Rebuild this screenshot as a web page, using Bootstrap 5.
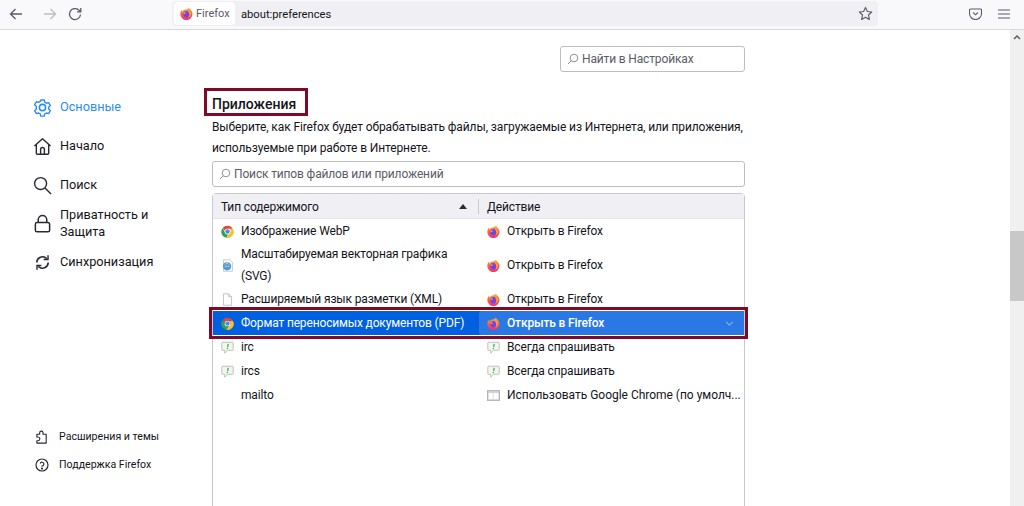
<!DOCTYPE html>
<html lang="ru">
<head>
<meta charset="utf-8">
<title>about:preferences</title>
<link href="https://cdn.jsdelivr.net/npm/bootstrap@5.3.0/dist/css/bootstrap.min.css" rel="stylesheet">
<style>
html,body{height:506px;overflow:hidden;background:#fff}
body{font-family:Roboto,"Noto Sans",sans-serif;font-size:12px;color:#15141a}
.ffbar{height:30px;background:#f9f9fb;border-bottom:1px solid #d9d9dc}
.navset{width:172px;padding:4px 0 0 9px}
.navbtn{height:20px;display:flex;align-items:center;color:#5b5b66}
.urlbox{width:706px;height:25px;margin-top:1px;background:#f0f0f4;border-radius:4px}
.idchip{width:61px;height:23px;margin-left:2px;background:#fff;border-radius:4px;padding-left:6px;gap:3px;color:#5b5b66;font-size:11px}
.idchip span{padding-top:2px}
.urltxt{margin-left:6px;font-size:11.2px;padding-top:3px;color:#15141a}
.staricon{margin-left:auto;margin-right:5px}
.rtools{padding-left:91px;gap:15px}
.pagewrap{height:476px}
.sidecol{width:212px;flex:none;position:relative}
.catlist{padding:65px 0 0 33px;list-style:none;margin:0}
.catitem{display:flex;align-items:center;gap:8px;font-size:12.7px;min-height:24px}
.catitem svg{flex:none;width:19px;height:19px}
.catitem.curr{color:#2a8cf5}
.step1{margin-bottom:15px}
.step2{margin-bottom:15px}
.step3{margin-bottom:9px}
.twolines{line-height:17px;margin-bottom:10px}
.foothelp{padding:0 0 0 35px;list-style:none;margin:0;position:absolute;left:0;top:395px}
.foothelp li{display:flex;align-items:center;gap:10px;font-size:10.6px;height:24px;margin-bottom:4px}
.maincol{width:533px;flex:none}
.srchbox{height:26px;border:1px solid #bdbdc3;border-radius:3px;display:flex;align-items:center;color:#5b5b66;padding-left:6px;gap:3px;background:#fff;font-size:12px;letter-spacing:-.15px}
.topsearch{width:185px;margin:16px 0 0 348px}
.headwrap{margin-top:16px;height:28px;display:flex;align-items:center}
.headmark{padding:3px 7px 0 8px;margin-left:-8px;outline:3px solid #7e0a26;outline-offset:-3px;height:28px;line-height:26px;font-size:14px;font-weight:500;width:104px;white-space:nowrap}
.descr{margin:1px 0 0;line-height:21px;font-size:12px;letter-spacing:-.11px;white-space:nowrap}
.fsearch{margin-top:2px}
.apptable{margin-top:6px;height:320px;border:1px solid #c8c8ce;border-radius:4px 4px 0 0;background:#fff}
.thead{height:25px;background:#f0f0f4;border-bottom:1px solid #e6e6ea;display:flex;align-items:center;font-size:12px;letter-spacing:-.15px;padding-top:1px}
.th1{width:266px;padding-left:8px;display:flex;align-items:center;justify-content:space-between;padding-right:11px;height:15px;border-right:1px solid #c8c8ce}
.th2{padding-left:8px}
.trow{display:flex;align-items:center;height:24px;font-size:12px;letter-spacing:-.15px}
.trow.tall{height:44px}
.cell1{width:266px;display:flex;align-items:center;padding-left:8px;flex:none;height:100%}
.cell2{flex:1;display:flex;align-items:center;padding-left:8px;height:100%;min-width:0;gap:7px;white-space:nowrap}
.cell1 svg,.cell2 svg{width:13px;height:13px;flex:none}
.cell1 svg{margin-right:7px}
.noicon{display:inline-block;width:13px;margin-right:7px}
.trow.sel{background:#0060df;color:#fff;outline:3px solid #7e0a26;outline-offset:1px}
.sel .cell2{background:#2a78e4;border-radius:3px 0 0 3px;font-weight:500;padding-right:10px}
.cell2 .chev{margin-left:auto;width:9px;height:5px}
.looser{letter-spacing:-.02px}
.sbar{width:14px;margin-left:265px;flex:none;background:#f0f0f0;display:flex;flex-direction:column;align-items:center}
.thumb{width:100%;height:70px;background:#c8c8c8;margin-top:191px}
.arrowtop{margin-top:5px;display:block}
.svgdefs{position:absolute}
.svgline{margin-top:4px}
</style>
</head>
<body>
<svg width="0" height="0" class="d-block svgdefs">
  <defs>
    <linearGradient id="fg" x1="0" y1="0" x2="0" y2="1"><stop offset="0" stop-color="#ffb52e"/><stop offset=".55" stop-color="#ff5a3c"/><stop offset="1" stop-color="#f22f6e"/></linearGradient>
    <symbol id="fx" viewBox="0 0 16 16">
      <path d="M11 .6c.4 1.600 1.400 2 2.400 3.200 1.300 1.500 2 3.300 2 4.800a7.500 7.500 0 1 1-15 0C.4 6.300 1.200 4.300 2.200 3.300c0 1 .4 1.700 1 2.200C4 3.700 6 2.900 8 2.700c1.400-.2 2.500-1 3-2.100z" fill="url(#fg)"/>
      <circle cx="8.200" cy="8.800" r="4" fill="#7542e5"/>
      <path d="M9 4.200c2.500.2 4.600 2 4.500 4.700-.2 2.400-2 4-4.200 4.200 1.600-.8 2.500-2.300 2.200-3.900C11.200 7.200 10.300 5.400 9 4.200z" fill="#ffa436"/>
      <path d="M4 7.500c.8-.8 2-1 3-.5l-.5 1.300C5.600 8.200 4.700 8 4 7.500z" fill="#ffd567"/>
    </symbol>
    <symbol id="chrm" viewBox="0 0 16 16">
      <path d="M8 .8a7.200 7.200 0 0 1 6.400 3.700H8A3.600 3.600 0 0 0 4.600 7L2.100 3.800A7.200 7.200 0 0 1 8 .8z" fill="#e0453a"/>
      <path d="M2.100 3.800 5.300 9.900a3.600 3.600 0 0 0 3.500 1.700l-2.100 4A7.200 7.200 0 0 1 2.100 3.800z" fill="#2fa44f"/>
      <path d="M14.400 4.500a7.200 7.200 0 0 1-7.700 11.100l3.400-5.600A3.600 3.600 0 0 0 10.700 5z" fill="#f6c12c"/>
      <circle cx="8" cy="8" r="3.500" fill="#fff"/><circle cx="8" cy="8" r="2.700" fill="#4a8be8"/>
    </symbol>
    <symbol id="bub" viewBox="0 0 16 16">
      <path d="M2 1.500h12a1 1 0 0 1 1 1v8a1 1 0 0 1-1 1H8L4.500 15v-3.500H2a1 1 0 0 1-1-1v-8a1 1 0 0 1 1-1z" fill="#f4f4f0" stroke="#b5b5ad"/>
      <path d="M8.800 3.500 8.200 7.500" stroke="#2fbf3c" stroke-width="1.600"/><circle cx="7.800" cy="9.300" r=".9" fill="#2fbf3c"/>
    </symbol>
    <symbol id="pg" viewBox="0 0 16 16">
      <path d="M3 1h6.500L13 4.500V15H3z" fill="#fff" stroke="#b8b8b8"/><path d="M9.500 1v3.500H13" fill="#eee" stroke="#b8b8b8"/>
    </symbol>
  </defs>
</svg>

<div class="ffbar d-flex">
  <div class="navset d-flex align-items-start">
    <span class="navbtn" style="width:34px"><svg width="14" height="14" viewBox="0 0 14 14" fill="none" stroke="#5b5b66" stroke-width="1.300"><path d="M13 7H1.500M6.500 2 1.500 7l5 5"/></svg></span>
    <span class="navbtn" style="width:25px"><svg width="14" height="14" viewBox="0 0 14 14" fill="none" stroke="#bcbcc2" stroke-width="1.300"><path d="M1 7h11.500M7.500 2l5 5-5 5"/></svg></span>
    <span class="navbtn" style="width:30px"><svg width="14" height="14" viewBox="0 0 14 14" fill="none" stroke="#5b5b66" stroke-width="1.300"><path d="M12.500 7.500A5.500 5.500 0 1 1 10.500 2.800L12.500 4.500"/><path d="M12.800 1v3.800H9"/></svg></span>
  </div>
  <div class="urlbox d-flex align-items-center">
    <div class="idchip d-flex align-items-center"><svg width="13" height="13"><use href="#fx"/></svg><span>Firefox</span></div>
    <span class="urltxt">about:preferences</span>
    <svg class="staricon" width="15" height="15" viewBox="0 0 16 16" fill="none" stroke="#5b5b66" stroke-width="1.200" stroke-linejoin="round"><path d="m8 1.500 2 4.300 4.600.6-3.400 3.200.9 4.700L8 12l-4.100 2.300.9-4.700L1.400 6.400 6 5.800z"/></svg>
  </div>
  <div class="rtools d-flex align-items-start pt-2">
    <svg width="13" height="12" viewBox="0 0 13 12" fill="none" stroke="#5b5b66" stroke-width="1.100"><path d="M1.500 1h10a1 1 0 0 1 1 1v3.500a6 6 0 0 1-12 0V2a1 1 0 0 1 1-1z"/><path d="m4 4.500 2.500 2.300L9 4.500"/></svg>
    <svg width="14" height="12" viewBox="0 0 14 12" fill="none" stroke="#5b5b66" stroke-width="1.200"><path d="M1 2h12M1 6h12M1 10h12"/></svg>
  </div>
</div>

<div class="pagewrap d-flex">
  <nav class="sidecol">
    <ul class="catlist">
      <li class="catitem curr step1"><svg viewBox="0 0 20 20" fill="none" stroke="#2a8cf5" stroke-width="1.600" stroke-linejoin="round"><path d="M8 1.500h4l.6 2.500 1.900 1.100 2.500-.7 2 3.400-1.900 1.800v2.200l1.900 1.800-2 3.400-2.500-.7-1.900 1.100-.6 2.500H8l-.6-2.500-1.900-1.100-2.500.7-2-3.400 1.900-1.800V8.600L1 6.800l2-3.400 2.500.7L7.400 3z" transform="translate(.8 .8) scale(.92)"/><circle cx="10" cy="10" r="3.300"/></svg><span>Основные</span></li>
      <li class="catitem step2"><svg viewBox="0 0 20 20" fill="none" stroke="#2b2a33" stroke-width="1.500" stroke-linejoin="round"><path d="M1.500 9.500 10 1.800l8.500 7.700M3.500 8v9.200a1 1 0 0 0 1 1h11a1 1 0 0 0 1-1V8"/><path d="M8 18v-5a2 2 0 0 1 4 0v5"/></svg><span>Начало</span></li>
      <li class="catitem step3"><svg viewBox="0 0 20 20" fill="none" stroke="#2b2a33" stroke-width="1.500"><circle cx="8" cy="8" r="6.300"/><path d="m12.600 12.600 6.400 6.400"/></svg><span>Поиск</span></li>
      <li class="catitem twolines"><svg viewBox="0 0 20 20" fill="none" stroke="#2b2a33" stroke-width="1.600"><rect x="2.500" y="9" width="15" height="9.800" rx="1.800"/><path d="M5.500 9V6a4.500 4.500 0 0 1 9 0v3"/></svg><span>Приватность и<br>Защита</span></li>
      <li class="catitem"><svg viewBox="0 0 20 20" fill="none" stroke="#2b2a33" stroke-width="1.700"><path d="M4 10a6 6 0 0 1 9.500-4.900l.8.800"/><path d="M15.800 2.300v4.600h-4.600" stroke-width="1.500"/><path d="M16 10a6 6 0 0 1-9.500 4.900l-.8-.8"/><path d="M4.200 17.700v-4.600h4.600" stroke-width="1.500"/></svg><span>Синхронизация</span></li>
    </ul>
    <ul class="foothelp">
      <li><svg width="14" height="14" viewBox="0 0 14 15" fill="none" stroke="#2b2a33" stroke-width="1.200" stroke-linejoin="round"><path d="M1.500 7.500V4.500h3V3a1.800 1.800 0 0 1 3.600 0v1.500h3.400V14H1.500v-2.500h1.200a2 2 0 0 0 0-4z"/></svg><span>Расширения и темы</span></li>
      <li><svg width="14" height="14" viewBox="0 0 14 14" fill="none" stroke="#2b2a33" stroke-width="1.200"><circle cx="7" cy="7" r="6"/><path d="M5.200 5.500A1.900 1.900 0 1 1 7 8v.8"/><circle cx="7" cy="10.600" r=".5" fill="#2b2a33"/></svg><span>Поддержка Firefox</span></li>
    </ul>
  </nav>

  <main class="maincol">
    <div class="srchbox topsearch"><svg width="12" height="12" viewBox="0 0 12 12" fill="none" stroke="#8f8f9d" stroke-width="1"><circle cx="7" cy="5" r="3.800"/><path d="M4.300 7.700 1 11"/></svg><span>Найти в Настройках</span></div>
    <div class="headwrap"><div class="headmark">Приложения</div></div>
    <p class="descr">Выберите, как Firefox будет обрабатывать файлы, загружаемые из Интернета, или приложения,<br>используемые при работе в Интернете.</p>
    <div class="srchbox fsearch"><svg width="12" height="12" viewBox="0 0 12 12" fill="none" stroke="#8f8f9d" stroke-width="1"><circle cx="7" cy="5" r="3.800"/><path d="M4.300 7.700 1 11"/></svg><span>Поиск типов файлов или приложений</span></div>
    <div class="apptable">
      <div class="thead">
        <div class="th1"><span>Тип содержимого</span><svg width="8" height="5" viewBox="0 0 8 5"><path d="M4 0 8 5H0z" fill="#2b2a33"/></svg></div>
        <div class="th2">Действие</div>
      </div>
      <div class="trow"><div class="cell1"><svg><use href="#chrm"/></svg>Изображение WebP</div><div class="cell2"><svg><use href="#fx"/></svg>Открыть в Firefox</div></div>
      <div class="trow tall"><div class="cell1"><svg viewBox="0 0 16 16"><path d="M3 1h8l3 3v11H3z" fill="#fff" stroke="#bbb"/><circle cx="7.500" cy="9" r="5" fill="#4a9be0"/><path d="M4.500 9h6M5 7c1-2 4-2 5 0" stroke="#f5d76e" fill="none"/></svg><span>Масштабируемая векторная графика<span class="d-block svgline">(SVG)</span></span></div><div class="cell2"><svg><use href="#fx"/></svg>Открыть в Firefox</div></div>
      <div class="trow"><div class="cell1"><svg><use href="#pg"/></svg>Расширяемый язык разметки (XML)</div><div class="cell2"><svg><use href="#fx"/></svg>Открыть в Firefox</div></div>
      <div class="trow sel"><div class="cell1"><svg><use href="#chrm"/></svg>Формат переносимых документов (PDF)</div><div class="cell2"><svg><use href="#fx"/></svg>Открыть в Firefox<svg class="chev" viewBox="0 0 10 6" fill="none" stroke="#cfe0fa" stroke-width="1"><path d="m1 1 4 4 4-4"/></svg></div></div>
      <div class="trow"><div class="cell1"><svg><use href="#bub"/></svg>irc</div><div class="cell2"><svg><use href="#bub"/></svg>Всегда спрашивать</div></div>
      <div class="trow"><div class="cell1"><svg><use href="#bub"/></svg>ircs</div><div class="cell2"><svg><use href="#bub"/></svg>Всегда спрашивать</div></div>
      <div class="trow"><div class="cell1"><span class="noicon"></span>mailto</div><div class="cell2"><svg viewBox="0 0 16 16"><rect x=".5" y="2" width="15" height="12" fill="#d4d4d4" stroke="#aaa"/><rect x="2" y="5" width="5" height="7.500" fill="#fff"/><rect x="8" y="5" width="6" height="7.500" fill="#fff"/></svg><span class="looser">Использовать Google Chrome (по умолч...</span></div></div>
    </div>
  </main>

  <aside class="sbar">
    <svg class="arrowtop" width="8" height="5" viewBox="0 0 8 5" fill="none" stroke="#555" stroke-width="1.400"><path d="m1 4 3-3 3 3"/></svg>
    <div class="thumb"></div>
  </aside>
</div>
<script src="https://cdn.jsdelivr.net/npm/bootstrap@5.3.0/dist/js/bootstrap.bundle.min.js"></script>
</body>
</html>
